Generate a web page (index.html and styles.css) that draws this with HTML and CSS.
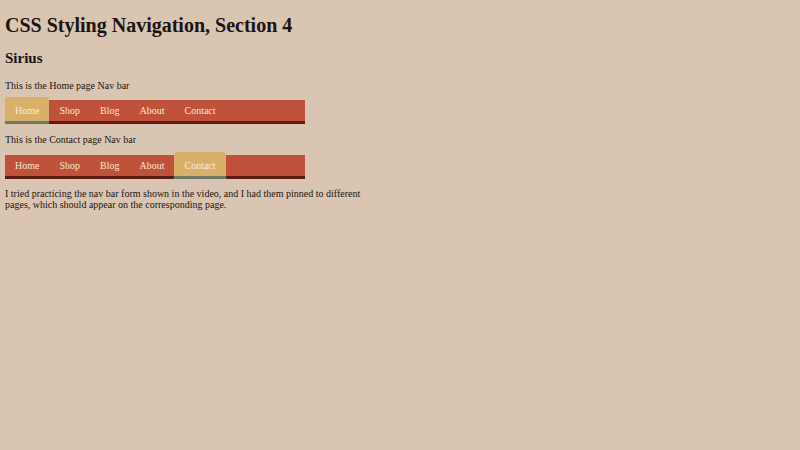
FILE: index.html
```html
<!DOCTYPE html>
<html lang="en">
<head>
<meta charset="utf-8">
<title>CSS Styling Navigation, Section 4</title>
<link rel="stylesheet" href="styles.css">
</head>
<body>
<h1>CSS Styling Navigation, Section 4</h1>
<h2>Sirius</h2>
<p class="label">This is the Home page Nav bar</p>
<nav class="nav">
  <ul class="nav-list">
    <li><a class="nav-link active" href="#">Home</a></li>
    <li><a class="nav-link" href="#">Shop</a></li>
    <li><a class="nav-link" href="#">Blog</a></li>
    <li><a class="nav-link" href="#">About</a></li>
    <li><a class="nav-link" href="#">Contact</a></li>
  </ul>
</nav>
<p class="label">This is the Contact page Nav bar</p>
<nav class="nav">
  <ul class="nav-list">
    <li><a class="nav-link" href="#">Home</a></li>
    <li><a class="nav-link" href="#">Shop</a></li>
    <li><a class="nav-link" href="#">Blog</a></li>
    <li><a class="nav-link" href="#">About</a></li>
    <li><a class="nav-link active" href="#">Contact</a></li>
  </ul>
</nav>
<p class="note">I tried practicing the nav bar form shown in the video, and I had them pinned to different pages, which should appear on the corresponding page.</p>
</body>
</html>
```
FILE: styles.css
```css
html {
  background: #d9c5b1;
}
body {
  margin: 5px;
  font-family: "Liberation Serif", "Times New Roman", serif;
  font-size: 10px;
  color: #1c1410;
}
h1 {
  font-size: 2em;
  margin: 9px 0 13.4px;
}
h2 {
  font-size: 1.5em;
  margin: 0.83em 0;
}
p {
  margin: 10px 0;
}
p.label {
  margin-bottom: 9px;
}
.nav + p.label {
  margin-bottom: 10px;
}
.nav {
  width: 300px;
  background: #c0513a;
  border-bottom: 3px solid #5c1c10;
  margin-top: 9px;
}
.nav-list {
  list-style: none;
  margin: 0;
  padding: 0;
  display: flex;
}
.nav-link {
  display: block;
  padding: 5px 10px;
  color: #f6e6d2;
  text-decoration: none;
}
.nav-link.active {
  background: #d8b06a;
  color: #f7ecd8;
  margin-top: -3px;
  padding-top: 8px;
  margin-bottom: -3px;
  border-bottom: 3px solid #6d7a63;
  border-radius: 3px 3px 0 0;
}
.note {
  width: 375px;
  margin-top: 9px;
}
```
